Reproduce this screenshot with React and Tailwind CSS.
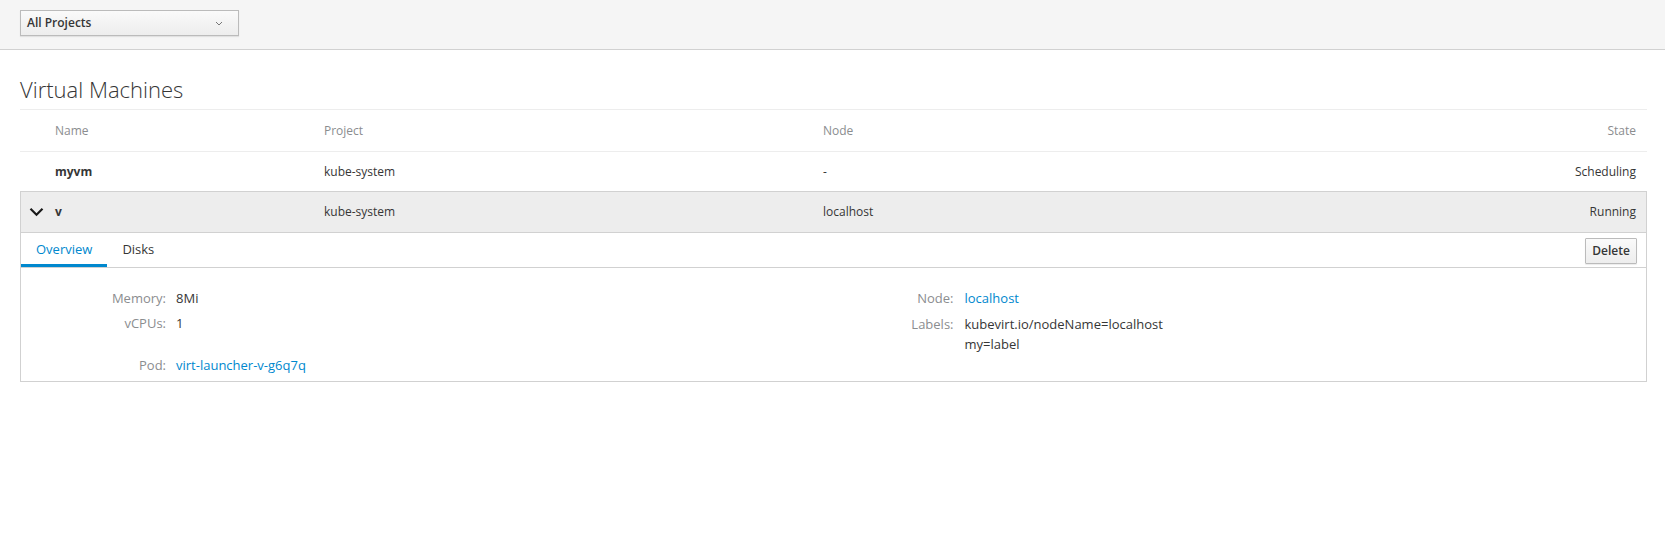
import React from "react";

const font = { fontFamily: '"Open Sans", "Noto Sans", sans-serif' };

function Chevron() {
  return (
    <svg width="15" height="10" viewBox="0 0 15 10" className="block">
      <polyline points="1.5,1.8 7.5,7.8 13.5,1.8" fill="none" stroke="#1a1a1a" strokeWidth="2.2" />
    </svg>
  );
}

function SmallCaret() {
  return (
    <svg width="8" height="5" viewBox="0 0 8 5" className="block">
      <polyline points="1,1 4,4 7,1" fill="none" stroke="#777" strokeWidth="1" />
    </svg>
  );
}

export default function App() {
  return (
    <div className="w-[1665px] h-[538px] bg-white text-[12px] text-[#363636]" style={font}>
      {/* toolbar */}
      <div className="h-[50px] bg-[#f5f5f5] border-b border-[#d1d1d1] px-[20px] pt-[10px]">
        <div className="w-[219px] h-[26px] border border-[#bbb] bg-gradient-to-b from-[#fafafa] to-[#ededed] shadow-[0_1px_1px_rgba(3,3,3,0.08)] flex items-center justify-between pl-[6px] pr-[15px]">
          <span className="font-semibold text-[#363636] text-[12px]">All Projects</span>
          <SmallCaret />
        </div>
      </div>

      <div className="pl-[20px] pr-[18px]">
        <h1 className="text-[22px] font-light text-[#363636] leading-[22px] pt-[28px] pb-[9px] border-b border-[#ededed]">
          Virtual Machines
        </h1>

        {/* header row */}
        <div className="h-[42px] flex items-center border-b border-[#ededed] text-[#8b8d8f] pl-[35px] pr-[11px]">
          <div className="w-[269px]">Name</div>
          <div className="w-[499px]">Project</div>
          <div className="flex-1">Node</div>
          <div>State</div>
        </div>

        {/* myvm row */}
        <div className="h-[39px] flex items-center pl-[35px] pr-[11px]">
          <div className="w-[269px] font-bold">myvm</div>
          <div className="w-[499px]">kube-system</div>
          <div className="flex-1">-</div>
          <div>Scheduling</div>
        </div>

        {/* expanded row */}
        <div className="border border-[#d1d1d1]">
          <div className="h-[41px] flex items-center bg-[#ededed] border-b border-[#d1d1d1] pl-[8px] pr-[10px]">
            <div className="w-[26px]"><Chevron /></div>
            <div className="w-[269px] font-bold">v</div>
            <div className="w-[499px]">kube-system</div>
            <div className="flex-1">localhost</div>
            <div>Running</div>
          </div>

          <div className="h-[35px] flex items-stretch justify-between border-b border-[#d1d1d1] text-[13px]">
            <div className="flex">
              <div className="px-[15px] flex items-center text-[#0088ce] border-b-[3px] border-[#0088ce] pt-[3px]">Overview</div>
              <div className="px-[15px] flex items-center pt-[3px] pb-[3px]">Disks</div>
            </div>
            <div className="flex items-center pr-[9px] pt-[1px]">
              <button className="h-[26px] w-[52px] border border-[#bbb] bg-gradient-to-b from-[#fafafa] to-[#ededed] font-semibold text-[12px] text-[#363636] rounded-[1px] shadow-[0_1px_1px_rgba(3,3,3,0.08)]" style={font}>
                Delete
              </button>
            </div>
          </div>

          <div className="flex pt-[20px] pb-[6px] px-[20px] leading-[20px] text-[13px]">
            <div className="flex-1">
              <div className="flex mb-[5px]">
                <div className="w-[125px] text-right text-[#8b8d8f]">Memory:</div>
                <div className="pl-[10px]">8Mi</div>
              </div>
              <div className="flex mb-[22px]">
                <div className="w-[125px] text-right text-[#8b8d8f]">vCPUs:</div>
                <div className="pl-[10px]">1</div>
              </div>
              <div className="flex">
                <div className="w-[125px] text-right text-[#8b8d8f]">Pod:</div>
                <div className="pl-[10px] text-[#0088ce]">virt-launcher-v-g6q7q</div>
              </div>
            </div>
            <div className="flex-1">
              <div className="flex mb-[6px]">
                <div className="w-[120px] text-right text-[#8b8d8f]">Node:</div>
                <div className="pl-[11px] text-[#0088ce]">localhost</div>
              </div>
              <div className="flex">
                <div className="w-[120px] text-right text-[#8b8d8f]">Labels:</div>
                <div className="pl-[11px]">
                  <div>kubevirt.io/nodeName=localhost</div>
                  <div>my=label</div>
                </div>
              </div>
            </div>
          </div>
        </div>
      </div>
    </div>
  );
}
